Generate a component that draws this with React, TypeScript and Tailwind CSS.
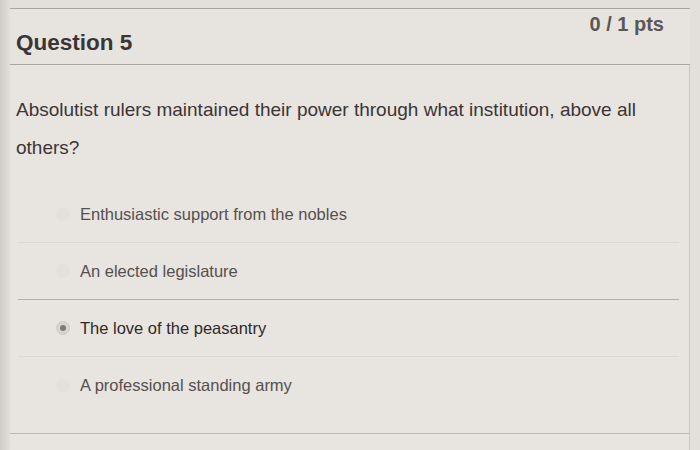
const answers = [
  { text: "Enthusiastic support from the nobles", selected: false },
  { text: "An elected legislature", selected: false },
  { text: "The love of the peasantry", selected: true },
  { text: "A professional standing army", selected: false },
];

export default function App() {
  return (
    <div
      className="flex h-[450px] w-[700px] overflow-hidden bg-[#e3dfda] text-[#3a3434]"
      style={{ fontFamily: '"Liberation Sans", Arial, sans-serif' }}
    >
      <div className="w-[10px] bg-gradient-to-r from-[#cfcbc6] to-[#e3dfda]" />
      <div className="flex w-[680px] flex-col pt-[8px]">
        <div className="border-y border-[#a9a5a1] bg-[#e7e3de]">
          <div className="flex h-[55px] items-start justify-between pl-[6px] pr-[26px]">
            <h2 className="m-0 pt-[23px] text-[22.5px] font-bold leading-none text-[#3a3535]">
              Question 5
            </h2>
            <span className="pt-[5px] text-[20px] font-bold leading-none text-[#5b5757]">
              0 / 1 pts
            </span>
          </div>
        </div>

        <div className="flex flex-1 flex-col border-r border-[#c9c5c0] bg-[#e8e4df]">
          <p className="m-0 w-[640px] pl-[6px] pt-[26px] text-[19px] leading-[38px] text-[#3c3535]">
            Absolutist rulers maintained their power through what institution, above all
            others?
          </p>

          <ul className="m-0 mt-[19px] list-none p-0">
            {answers.map((a, i) => (
              <li
                key={a.text}
                className={
                  "ml-[8px] mr-[10px] flex h-[57px] items-center gap-[10px] pl-[38px] " +
                  (i === 1
                    ? "border-b border-[#b3afab]"
                    : i < 3
                      ? "border-b border-[#dcd8d3]"
                      : "")
                }
              >
                <span
                  className={
                    "flex h-[14px] w-[14px] shrink-0 items-center justify-center rounded-full " +
                    (a.selected ? "border border-[#cfcbc6] bg-[#d8d4cf]" : "bg-[#e4e0db]")
                  }
                >
                  {a.selected && <span className="h-[6px] w-[6px] rounded-full bg-[#7d7975]" />}
                </span>
                <span
                  className={
                    "text-[16.5px] leading-none " +
                    (a.selected ? "text-[#2e2a2a]" : "text-[#555050]")
                  }
                >
                  {a.text}
                </span>
              </li>
            ))}
          </ul>
          <div className="mb-[16px] mt-auto border-b border-[#bdb9b4]" />
        </div>
      </div>
    </div>
  );
}
